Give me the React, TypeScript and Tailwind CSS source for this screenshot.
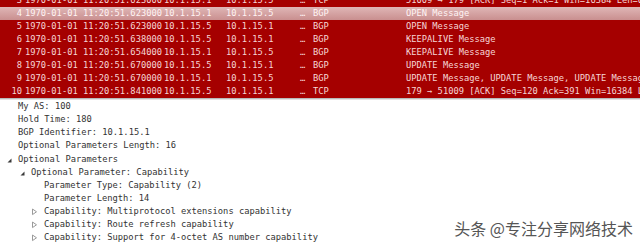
const mono = { fontFamily: '"DejaVu Sans Mono", "Liberation Mono", monospace' };

type Pkt = { no: number; time: string; src: string; dst: string; proto: string; info: string };

const packets: Pkt[] = [
  { no: 3, time: '1970-01-01 11:20:51.623000', src: '10.1.15.1', dst: '10.1.15.5', proto: 'TCP', info: '51009 → 179 [ACK] Seq=1 Ack=1 Win=16384 Len=0' },
  { no: 4, time: '1970-01-01 11:20:51.623000', src: '10.1.15.1', dst: '10.1.15.5', proto: 'BGP', info: 'OPEN Message' },
  { no: 5, time: '1970-01-01 11:20:51.623000', src: '10.1.15.5', dst: '10.1.15.1', proto: 'BGP', info: 'OPEN Message' },
  { no: 6, time: '1970-01-01 11:20:51.638000', src: '10.1.15.5', dst: '10.1.15.1', proto: 'BGP', info: 'KEEPALIVE Message' },
  { no: 7, time: '1970-01-01 11:20:51.654000', src: '10.1.15.1', dst: '10.1.15.5', proto: 'BGP', info: 'KEEPALIVE Message' },
  { no: 8, time: '1970-01-01 11:20:51.670000', src: '10.1.15.5', dst: '10.1.15.1', proto: 'BGP', info: 'UPDATE Message' },
  { no: 9, time: '1970-01-01 11:20:51.670000', src: '10.1.15.1', dst: '10.1.15.5', proto: 'BGP', info: 'UPDATE Message, UPDATE Message, UPDATE Message' },
  { no: 10, time: '1970-01-01 11:20:51.841000', src: '10.1.15.5', dst: '10.1.15.1', proto: 'TCP', info: '179 → 51009 [ACK] Seq=120 Ack=391 Win=16384 Len=0' },
];

type Node = { text: string; level: number; mark?: 'open' | 'closed' };

const details: Node[] = [
  { text: 'My AS: 100', level: 0 },
  { text: 'Hold Time: 180', level: 0 },
  { text: 'BGP Identifier: 10.1.15.1', level: 0 },
  { text: 'Optional Parameters Length: 16', level: 0 },
  { text: 'Optional Parameters', level: 0, mark: 'open' },
  { text: 'Optional Parameter: Capability', level: 1, mark: 'open' },
  { text: 'Parameter Type: Capability (2)', level: 2 },
  { text: 'Parameter Length: 14', level: 2 },
  { text: 'Capability: Multiprotocol extensions capability', level: 2, mark: 'closed' },
  { text: 'Capability: Route refresh capability', level: 2, mark: 'closed' },
  { text: 'Capability: Support for 4-octet AS number capability', level: 2, mark: 'closed' },
];

const indent = ['w-[5px]', 'w-[18px]', 'w-[31px]'];

function Mark({ kind }: { kind?: 'open' | 'closed' }) {
  if (kind === 'open') {
    return (
      <svg width="13" height="13" viewBox="0 0 13 13">
        <path d="M6.5 5.5 L6.5 9.5 L2.5 9.5 Z" fill="#3a3a3a" />
      </svg>
    );
  }
  if (kind === 'closed') {
    return (
      <svg width="13" height="13" viewBox="0 0 13 13">
        <path d="M1.5 4 L5.5 6.8 L1.5 9.6 Z" fill="#fff" stroke="#9a9a9a" strokeWidth="1" />
      </svg>
    );
  }
  return <span className="w-[13px]" />;
}

export default function App() {
  return (
    <div className="w-[640px] h-[244px] overflow-hidden bg-white relative" style={mono}>
      <div className="h-[98px] overflow-hidden bg-[#a50000]">
        <div className="-mt-[6px] text-[8.75px]">
          {packets.map((p) => (
            <div
              key={p.no}
              className={
                'flex h-[13px] items-center whitespace-nowrap ' +
                (p.no === 4
                  ? 'bg-gradient-to-b from-[#dfb6b6] to-[#c98f8f] text-[#fff4f4]'
                  : 'text-[#f6d6d6]')
              }
            >
              <span className="w-[22px] shrink-0 text-right">{p.no}</span>
              <span className="w-[142px] shrink-0 pl-[3px]">{p.time}</span>
              <span className="w-[62px] shrink-0">{p.src}</span>
              <span className="w-[74px] shrink-0">{p.dst}</span>
              <span className="w-[13px] shrink-0">…</span>
              <span className="w-[93px] shrink-0">{p.proto}</span>
              <span className="whitespace-nowrap">{p.info}</span>
            </div>
          ))}
        </div>
      </div>
      <div className="h-[1px] bg-[#b9b9b9]" />
      <div className="h-[1px] bg-[#e2e2e2]" />
      <div className="text-[8.75px] text-[#333333]">
        {details.map((d, i) => (
          <div key={i} className="flex h-[13.15px] items-center whitespace-nowrap">
            <span className={indent[d.level] + ' shrink-0'} />
            <span className="w-[13px] shrink-0 flex items-center">
              <Mark kind={d.mark} />
            </span>
            <span>{d.text}</span>
          </div>
        ))}
      </div>
      <div
        className="absolute right-[7px] top-[216px] text-[16px] text-[#555555] whitespace-nowrap"
        style={{
          fontFamily: '"Noto Sans CJK SC", "Noto Sans", sans-serif',
          textShadow: '0 0 2px #fff, 0 0 2px #fff, 1px 1px 0 #fff',
        }}
      >
        头条 @专注分享网络技术
      </div>
    </div>
  );
}
